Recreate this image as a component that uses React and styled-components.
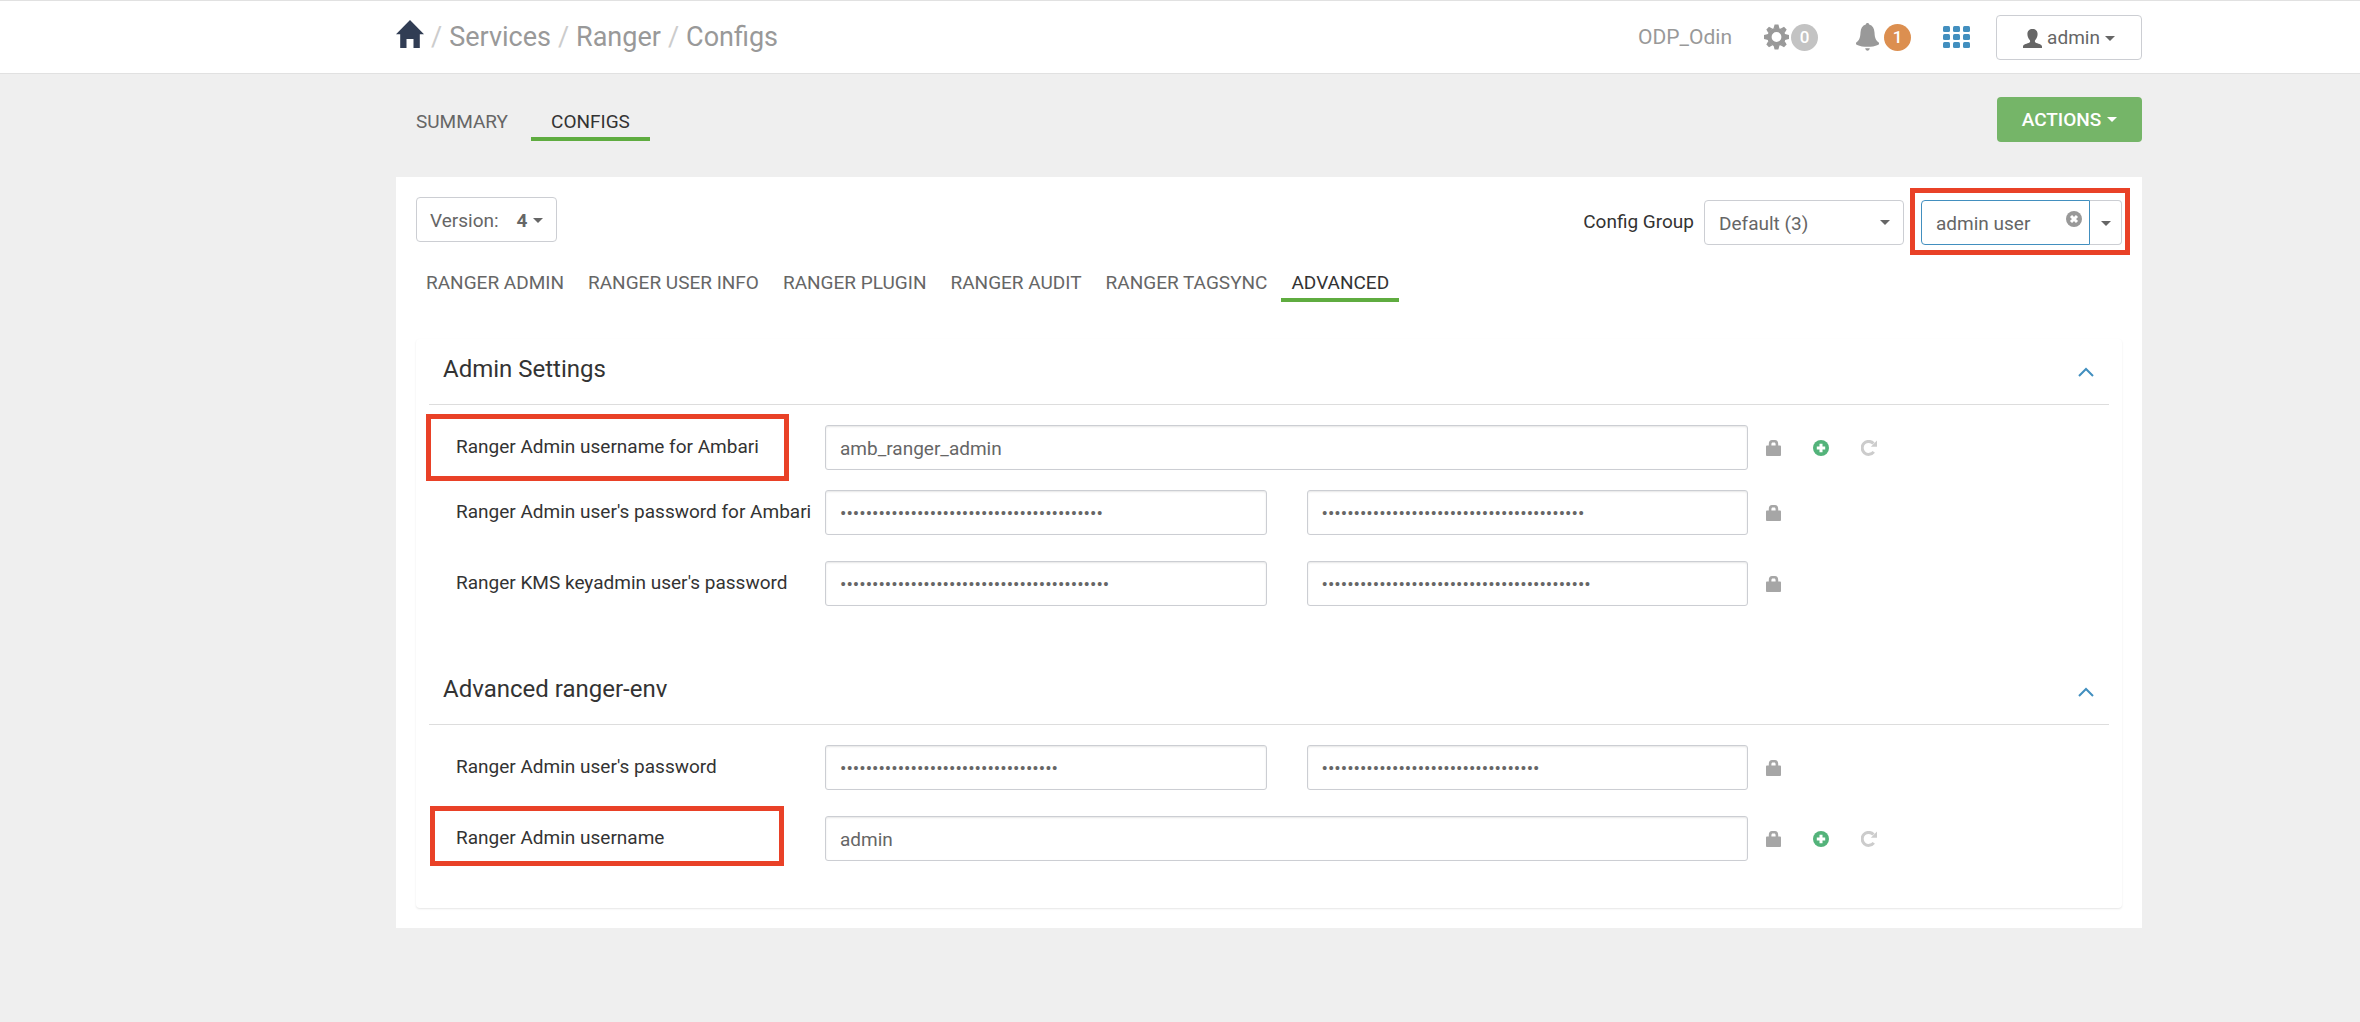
import React, {useState} from 'react'
import styled, {createGlobalStyle} from 'styled-components'

const mainTabs = ['Summary', 'Configs']
const configTabs = ['Ranger Admin', 'Ranger User Info', 'Ranger Plugin', 'Ranger Audit', 'Ranger Tagsync', 'Advanced']

const sections = [
  {
    title: 'Admin Settings',
    fields: [
      {id: 'ambari-username', label: 'Ranger Admin username for Ambari', value: 'amb_ranger_admin', mark: '-11px 36px -11px -30px'},
      {id: 'ambari-password', label: "Ranger Admin user's password for Ambari", length: 41},
      {id: 'kms-password', label: "Ranger KMS keyadmin user's password", length: 42},
    ],
  },
  {
    title: 'Advanced ranger-env',
    fields: [
      {id: 'admin-password', label: "Ranger Admin user's password", length: 34},
      {id: 'admin-username', label: 'Ranger Admin username', value: 'admin', mark: '-10px 41px -5px -26px'},
    ],
  },
]

function HomeIcon() {
  return (
    <svg width="28" height="28" viewBox="0 0 28 28" fill="#313d54" aria-hidden="true">
      <path d="M14 0 28 14.200h-4.200V28h-6.300v-9h-7v9H4.200V14.200H0z" />
    </svg>
  )
}

function GearIcon() {
  return (
    <svg width="25" height="26" viewBox="-12.500 -12.500 25 25" fill="#999" aria-hidden="true">
      <path fillRule="evenodd" d="M0-9.200A9.200 9.200 0 1 0 0 9.200 9.200 9.200 0 0 0 0-9.200ZM0-4.900A4.900 4.900 0 1 1 0 4.900 4.900 4.900 0 0 1 0-4.900Z" />
      {[0, 45, 90, 135, 180, 225, 270, 315].map(deg => (
        <path key={deg} d="M-3-8.500-1.900-12.500h3.800L3-8.500z" transform={`rotate(${deg})`} />
      ))}
    </svg>
  )
}

function BellIcon() {
  return (
    <svg width="23" height="28" viewBox="0 0 23 28" fill="#999" aria-hidden="true">
      <path d="M11.500 0c1 0 1.600.6 1.700 1.600 3.400.9 5 3.700 5.300 7.900.3 5.200 1 7.600 4.500 10.200v1.600c-1.500 1.100-3.500 1.800-6 2.100-3.600.4-7.400.4-11 0-2.500-.3-4.500-1-6-2.100v-1.600c3.500-2.600 4.200-5 4.500-10.200.3-4.200 1.900-7 5.300-7.900C9.900.6 10.500 0 11.500 0z" />
      <path d="M9.200 25.300h4.600c-.2 1.500-1.200 2.400-2.300 2.400s-2.100-.9-2.300-2.400z" />
    </svg>
  )
}

function GridIcon() {
  return (
    <svg width="27" height="22" viewBox="0 0 27 22" fill="#428fbf" aria-hidden="true">
      {[0, 8, 16].map(y => [0, 10, 20].map(x => (
        <rect key={`${x}-${y}`} x={x} y={y} width="7" height="6" rx="1.500" />
      )))}
    </svg>
  )
}

function UserIcon() {
  return (
    <svg width="19" height="19" viewBox="0 0 19 19" fill="#666" aria-hidden="true">
      <path d="M9.500 0c3.200 0 5.100 2 5.100 5.100 0 2.300-.9 4.500-2.300 5.900-.6.700-.6 2 .2 2.500 2 1.200 6.500 1.700 6.500 4.100V19H0v-1.400c0-2.400 4.500-2.900 6.500-4.100.8-.5.800-1.800.2-2.500C5.300 9.600 4.400 7.400 4.400 5.100 4.400 2 6.300 0 9.500 0z" />
    </svg>
  )
}

function LockIcon() {
  return (
    <svg width="15" height="16" viewBox="0 0 15 16" fill="#a6a6a6" aria-hidden="true">
      <path fillRule="evenodd" d="M1.200 5.500h1.600V4C2.800 1.500 4 0 6 0h3c2 0 3.200 1.500 3.200 4v1.500h1.600c.8 0 1.200.4 1.200 1.200v8.100c0 .8-.4 1.200-1.200 1.200H1.200C.4 16 0 15.600 0 14.800V6.700c0-.8.4-1.200 1.200-1.200zm4.200 0h4.200V4c0-1-.6-1.600-1.400-1.600H6.800c-.8 0-1.400.6-1.400 1.600z" />
    </svg>
  )
}

function PlusIcon() {
  return (
    <svg width="16" height="16" viewBox="0 0 16 16" aria-hidden="true">
      <circle cx="8" cy="8" r="8" fill="#53b37a" />
      <path d="M6.500 3.800h3v2.700h2.700v3H9.500v2.700h-3V9.500H3.800v-3h2.700z" fill="#fff" />
    </svg>
  )
}

function RefreshIcon() {
  return (
    <svg width="16" height="16" viewBox="0 0 16 16" aria-hidden="true">
      <path d="M12.800 11.900A6.500 6.500 0 1 1 12.500 3.500" fill="none" stroke="#ccc" strokeWidth="3" />
      <path d="M16 .6v6.200H9.800z" fill="#ccc" />
    </svg>
  )
}

function ClearIcon() {
  return (
    <svg width="16" height="16" viewBox="0 0 16 16" aria-hidden="true">
      <circle cx="8" cy="8" r="8" fill="#999" />
      <path d="m5 5 6 6m0-6-6 6" stroke="#fff" strokeWidth="3" />
    </svg>
  )
}

function ChevronIcon() {
  return (
    <svg width="16" height="10" viewBox="0 0 16 10" aria-hidden="true">
      <path d="m1 9 7-7 7 7" fill="none" stroke="#428fbf" strokeWidth="2" />
    </svg>
  )
}

function Field({field}) {
  const secret = 'x'.repeat(field.length || 0)
  return (
    <Row $secret={!!field.length}>
      <FieldLabel htmlFor={field.id}>
        {field.label}
        {field.mark && <Mark $inset={field.mark} />}
      </FieldLabel>
      {field.length ? (
        <Inputs>
          <TextInput id={field.id} type="password" defaultValue={secret} />
          <TextInput type="password" defaultValue={secret} aria-label={`Confirm ${field.label}`} />
        </Inputs>
      ) : (
        <Inputs>
          <TextInput id={field.id} type="text" defaultValue={field.value} />
        </Inputs>
      )}
      <RowActions>
        <PlainButton aria-label="Lock"><LockIcon /></PlainButton>
        {field.value && <PlainButton aria-label="Override"><PlusIcon /></PlainButton>}
        {field.value && <PlainButton aria-label="Refresh"><RefreshIcon /></PlainButton>}
      </RowActions>
    </Row>
  )
}

function Section({section}) {
  const [open, setOpen] = useState(true)
  return (
    <section>
      <SectionHeader>
        <h2>{section.title}</h2>
        <PlainButton aria-label="Toggle section" onClick={() => setOpen(!open)}><ChevronIcon /></PlainButton>
      </SectionHeader>
      {open && (
        <SectionBody>
          {section.fields.map(field => <Field key={field.id} field={field} />)}
        </SectionBody>
      )}
    </section>
  )
}

function App() {
  const [tab, setTab] = useState('Configs')
  const [configTab, setConfigTab] = useState('Advanced')
  const [filter, setFilter] = useState('admin user')

  return (
    <>
      <GlobalStyle />
      <Header>
        <Breadcrumbs>
          <HomeLink href="#home" aria-label="Home"><HomeIcon /></HomeLink>
          <Slash>/</Slash>
          <a href="#services">Services</a>
          <Slash>/</Slash>
          <a href="#ranger">Ranger</a>
          <Slash>/</Slash>
          <a href="#configs">Configs</a>
        </Breadcrumbs>
        <HeaderRight>
          <ClusterName href="#cluster">ODP_Odin</ClusterName>
          <IconButton aria-label="Background operations"><GearIcon /><Badge $color="#c3c3c3">0</Badge></IconButton>
          <IconButton aria-label="Alerts" $gap="5px"><BellIcon /><Badge $color="#dc8f50">1</Badge></IconButton>
          <PlainButton aria-label="Views"><GridIcon /></PlainButton>
          <UserButton><UserIcon />admin<Caret /></UserButton>
        </HeaderRight>
      </Header>
      <Main>
        <TopBar>
          <MainTabs $gap="3px">
            {mainTabs.map(name => (
              <Tab key={name} href="#" $pad="20px" $active={tab === name} onClick={() => setTab(name)}>{name}</Tab>
            ))}
          </MainTabs>
          <ActionsButton>Actions<Caret /></ActionsButton>
        </TopBar>
        <Panel>
          <Toolbar>
            <VersionButton>Version:<b>4</b><Caret /></VersionButton>
            <Filters>
              <label htmlFor="config-group">Config Group</label>
              <SelectWrap>
                <Select id="config-group">
                  <option>Default (3)</option>
                </Select>
                <Caret />
              </SelectWrap>
              <Search>
                <SearchInput aria-label="Filter" value={filter} onChange={e => setFilter(e.target.value)} />
                <ClearButton aria-label="Clear filter" onClick={() => setFilter('')}><ClearIcon /></ClearButton>
                <SearchToggle aria-label="Filter options"><Caret /></SearchToggle>
                <Mark $inset="-12px -8px -10px -11px" />
              </Search>
            </Filters>
          </Toolbar>
          <ConfigTabs $gap="4px">
            {configTabs.map(name => (
              <Tab key={name} href="#" $pad="10px" $active={configTab === name} onClick={() => setConfigTab(name)}>{name}</Tab>
            ))}
          </ConfigTabs>
          <Accordion>
            {sections.map(section => <Section key={section.title} section={section} />)}
          </Accordion>
        </Panel>
      </Main>
    </>
  )
}
export default App

const GlobalStyle = createGlobalStyle`
*{
    box-sizing: border-box;
}
body{
    margin: 0;
    background: #efefef;
    color: #333;
    font-family: Roboto, "Liberation Sans", sans-serif;
    font-size: 19px;
    line-height: 20px;
}
button, input, select{
    font: inherit;
    color: #666;
    margin: 0;
}
button{
    cursor: pointer;
}
a{
    color: inherit;
    text-decoration: none;
}
svg{
    display: block;
    flex-shrink: 0;
}
`
const Header = styled.header`
display: flex;
align-items: center;
justify-content: space-between;
height: 74px;
padding: 0 218px 0 396px;
background: #fff;
border-top: 1px solid #e1e1e1;
border-bottom: 1px solid #e1e1e1;
color: #999;
`
const Breadcrumbs = styled.nav`
display: flex;
align-items: center;
gap: 7px;
font-size: 27px;
line-height: 32px;
`
const HomeLink = styled.a`
padding-bottom: 6px;
`
const Slash = styled.span`
color: #ccc;
`
const HeaderRight = styled.div`
display: flex;
align-items: center;
gap: 26px;
`
const ClusterName = styled.a`
font-size: 21px;
`
const PlainButton = styled.button`
display: flex;
align-items: center;
padding: 0;
border: 0;
background: none;
`
const IconButton = styled(PlainButton)`
gap: ${props => props.$gap || '2px'};
padding: 0 6px;
`
const Badge = styled.span`
width: 27px;
height: 27px;
border-radius: 50%;
background: ${props => props.$color};
color: #fff;
font-size: 17px;
font-weight: 500;
line-height: 27px;
text-align: center;
`
const Caret = styled.span`
border: 5px solid transparent;
border-top-color: currentColor;
border-bottom: 0;
`
const Button = styled.button`
display: flex;
align-items: center;
justify-content: center;
gap: 6px;
height: 45px;
border: 1px solid #ccced3;
border-radius: 4px;
background: #fff;
`
const UserButton = styled(Button)`
width: 146px;
padding: 2px 0 0;
gap: 5px;
`
const ActionsButton = styled(Button)`
width: 145px;
border: 0;
background: #75b568;
color: #fff;
font-weight: 500;
text-transform: uppercase;
`
const VersionButton = styled(Button)`
padding: 2px 13px 0;
b{
    padding-left: 12px;
}
`
const Main = styled.main`
padding: 23px 218px 40px 396px;
`
const TopBar = styled.div`
display: flex;
align-items: flex-end;
justify-content: space-between;
`
const Tabs = styled.nav`
display: flex;
gap: ${props => props.$gap};
`
const MainTabs = styled(Tabs)`
margin-bottom: 1px;
`
const ConfigTabs = styled(Tabs)`
margin-top: 28px;
`
const Tab = styled.a`
padding: 0 ${props => props.$pad} 5px;
border-bottom: 4px solid ${props => props.$active ? '#5fac40' : 'transparent'};
color: ${props => props.$active ? '#333' : '#666'};
text-transform: uppercase;
white-space: nowrap;
`
const Panel = styled.div`
margin-top: 35px;
padding: 20px;
background: #fff;
`
const Toolbar = styled.div`
display: flex;
align-items: flex-start;
justify-content: space-between;
`
const Filters = styled.div`
display: flex;
align-items: center;
gap: 10px;
margin-top: 3px;
label{
    padding-bottom: 2px;
}
`
const SelectWrap = styled.div`
position: relative;
width: 200px;
margin-right: 7px;
${Caret}{
    position: absolute;
    right: 14px;
    top: 20px;
    color: #666;
    pointer-events: none;
}
`
const Select = styled.select`
width: 100%;
height: 45px;
padding: 2px 14px 0;
border: 1px solid #ccced3;
border-radius: 4px;
background: #fff;
appearance: none;
`
const Search = styled.div`
position: relative;
display: flex;
width: 201px;
`
const SearchInput = styled.input`
flex: 1;
min-width: 0;
height: 45px;
padding: 2px 40px 0 14px;
border: 1px solid #428fbf;
border-radius: 4px 0 0 4px;
outline: none;
`
const ClearButton = styled(PlainButton)`
position: absolute;
top: 11px;
right: 40px;
`
const SearchToggle = styled(Button)`
width: 32px;
padding: 2px 0 0;
border-left: 0;
border-radius: 0 4px 4px 0;
`
const Mark = styled.span`
position: absolute;
inset: ${props => props.$inset};
border: 5px solid #e94127;
pointer-events: none;
`
const Accordion = styled.div`
margin-top: 37px;
padding: 0 13px;
border-radius: 4px;
box-shadow: 0 1px 2px rgba(0, 0, 0, .1);
`
const SectionHeader = styled.div`
display: flex;
align-items: center;
justify-content: space-between;
height: 66px;
padding: 0 15px 0 14px;
border-bottom: 1px solid #ddd;
h2{
    margin: 0;
    padding-bottom: 6px;
    font-size: 24px;
    font-weight: 400;
    line-height: 28px;
}
`
const SectionBody = styled.div`
padding: 20px 0 27px 27px;
`
const Row = styled.div`
display: grid;
grid-template-columns: 369px 1fr 361px;
margin-bottom: ${props => props.$secret ? '26px' : '20px'};
`
const FieldLabel = styled.label`
position: relative;
padding-top: 12px;
white-space: nowrap;
`
const Inputs = styled.div`
display: flex;
gap: 40px;
`
const TextInput = styled.input`
flex: 1;
min-width: 0;
height: 45px;
padding: 2px 14px 0;
border: 1px solid #ccced3;
border-radius: 3px;
background: #fff;
box-shadow: inset 0 1px 2px rgba(0, 0, 0, .1);
`
const RowActions = styled.div`
display: flex;
align-items: center;
gap: 32px;
padding: 1px 0 0 18px;
`
